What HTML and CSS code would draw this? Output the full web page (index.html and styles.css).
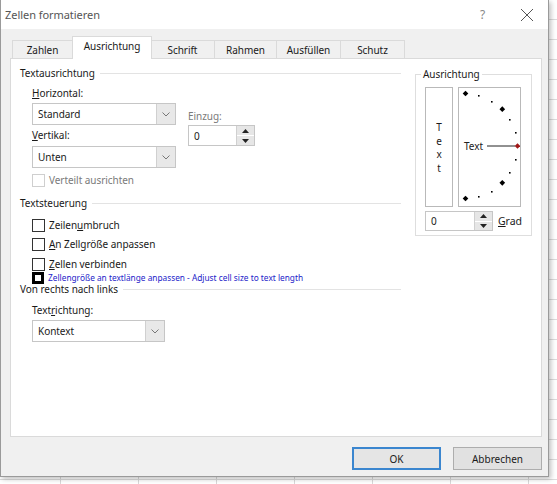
FILE: index.html
```html
<!DOCTYPE html>
<html lang="de">
<head>
<meta charset="utf-8">
<title>Zellen formatieren</title>
<link rel="stylesheet" href="styles.css">
</head>
<body>
<div class="desk">
  <div class="dialog">
    <div class="titlebar">
      <span class="title">Zellen formatieren</span>
      <span class="help">?</span>
      <span class="close">
        <svg width="14" height="14" viewBox="0 0 14 14"><path d="M1 1L13 13M13 1L1 13" stroke="#555" stroke-width="1" fill="none"/></svg>
      </span>
    </div>
    <div class="tabs">
      <div class="tab t1">Zahlen</div>
      <div class="tab t2 sel">Ausrichtung</div>
      <div class="tab t3">Schrift</div>
      <div class="tab t4">Rahmen</div>
      <div class="tab t5">Ausfüllen</div>
      <div class="tab t6">Schutz</div>
    </div>
    <div class="panel">
      <div class="leftcol">
        <div class="legend l1"><span>Textausrichtung</span></div>
        <div class="hv">
          <div class="hvleft">
            <div class="label lab-h"><u>H</u>orizontal:</div>
            <div class="select wide"><span class="val">Standard</span><span class="drop"><svg width="8" height="5" viewBox="0 0 8 5"><path d="M0.5 0.5L4 4L7.5 0.5" stroke="#777" fill="none"/></svg></span></div>
            <div class="label lab-v"><u>V</u>ertikal:</div>
            <div class="select wide sel2"><span class="val">Unten</span><span class="drop"><svg width="8" height="5" viewBox="0 0 8 5"><path d="M0.5 0.5L4 4L7.5 0.5" stroke="#777" fill="none"/></svg></span></div>
          </div>
          <div class="einzug">
            <div class="label gray">Einzug:</div>
            <div class="spin">
              <span class="val">0</span>
              <span class="spinbtns">
                <span class="sb"><svg width="7" height="4" viewBox="0 0 7 4"><path d="M0 4L3.5 0L7 4Z" fill="#222"/></svg></span>
                <span class="sb"><svg width="7" height="4" viewBox="0 0 7 4"><path d="M0 0L3.5 4L7 0Z" fill="#222"/></svg></span>
              </span>
            </div>
          </div>
        </div>
        <div class="cbrow dis"><span class="cb"></span><span class="gray">Verteilt ausrichten</span></div>
        <div class="legend l2"><span>Textsteuerung</span></div>
        <div class="cbrow c1"><span class="cb"></span><span>Zeilen<u>u</u>mbruch</span></div>
        <div class="cbrow c2"><span class="cb"></span><span><u>A</u>n Zellgröße anpassen</span></div>
        <div class="cbrow c3"><span class="cb"></span><span><u>Z</u>ellen verbinden</span></div>
        <div class="blackrow"><span class="bcb"></span><span class="blue">Zellengröße an textlänge anpassen - Adjust cell size to text length</span></div>
        <div class="legend l3"><span>Von rechts nach links</span></div>
        <div class="label lab-t">Text<u>r</u>ichtung:</div>
        <div class="select narrow"><span class="val">Kontext</span><span class="drop"><svg width="8" height="5" viewBox="0 0 8 5"><path d="M0.5 0.5L4 4L7.5 0.5" stroke="#777" fill="none"/></svg></span></div>
      </div>
      <fieldset class="orient">
        <legend>Ausrichtung</legend>
        <div class="orbox">
          <div class="vtext"><span>T</span><span>e</span><span>x</span><span>t</span></div>
          <div class="dial">
            <svg width="61" height="118" viewBox="0 0 61 118">
              <text x="5" y="62" font-family="Noto Sans, sans-serif" font-size="10" fill="#222">Text</text>
              <line x1="28" y1="58" x2="56" y2="58" stroke="#222" stroke-width="1"/>
              <g fill="#000">
                <rect x="4.5" y="3.5" width="4" height="4" transform="rotate(45 6.5 5.5)"/>
                <rect x="4.5" y="108.5" width="4" height="4" transform="rotate(45 6.5 110.5)"/>
                <rect x="41.3" y="19.2" width="4" height="4" transform="rotate(45 43.3 21.2)"/>
                <rect x="41.3" y="92.8" width="4" height="4" transform="rotate(45 43.3 94.8)"/>
                <rect x="19" y="7" width="1.6" height="1.6"/>
                <rect x="32" y="13" width="1.6" height="1.6"/>
                <rect x="50" y="31" width="1.6" height="1.6"/>
                <rect x="56" y="44" width="1.6" height="1.6"/>
                <rect x="56" y="71" width="1.6" height="1.6"/>
                <rect x="50" y="84" width="1.6" height="1.6"/>
                <rect x="32" y="103" width="1.6" height="1.6"/>
                <rect x="19" y="108" width="1.6" height="1.6"/>
              </g>
              <rect x="56.5" y="56" width="4" height="4" transform="rotate(45 58.5 58)" fill="#a01818"/>
            </svg>
          </div>
        </div>
        <div class="gradrow">
          <div class="spin gspin">
            <span class="val">0</span>
            <span class="spinbtns">
              <span class="sb"><svg width="7" height="4" viewBox="0 0 7 4"><path d="M0 4L3.5 0L7 4Z" fill="#222"/></svg></span>
              <span class="sb"><svg width="7" height="4" viewBox="0 0 7 4"><path d="M0 0L3.5 4L7 0Z" fill="#222"/></svg></span>
            </span>
          </div>
          <span class="grad"><u>G</u>rad</span>
        </div>
      </fieldset>
    </div>
    <div class="footer">
      <button class="btn ok">OK</button>
      <button class="btn cancel">Abbrechen</button>
    </div>
  </div>
</div>
</body>
</html>
```
FILE: styles.css
```css
html, body {
  margin: 0;
  padding: 0;
}
body {
  width: 557px;
  height: 484px;
  overflow: hidden;
  background-color: #ffffff;
  background-image:
    repeating-linear-gradient(to right, transparent 0, transparent 60px, #d8d8d8 60px, #d8d8d8 61px, transparent 61px, transparent 78px),
    repeating-linear-gradient(to bottom, transparent 0, transparent 19px, #dcdcdc 19px, #dcdcdc 20px);
  font-family: "Noto Sans", "Open Sans", sans-serif;
  font-size: 10px;
  letter-spacing: -0.05px;
  color: #1a1a1a;
}
.desk {
  width: 557px;
  height: 484px;
}
.dialog {
  width: 549px;
  height: 477px;
  background: #f0f0f0;
  border: 1px solid #9a9a9a;
  border-top: none;
  box-shadow: 2px 2px 5px rgba(0,0,0,0.25);
  display: flex;
  flex-direction: column;
  box-sizing: border-box;
}
.titlebar {
  height: 29px;
  background: #ffffff;
  display: flex;
  align-items: center;
  flex-shrink: 0;
}
.title {
  font-size: 11px;
  color: #555555;
  margin-left: 4px;
  flex: 1;
}
.help {
  font-size: 12px;
  color: #888;
  width: 8px;
  margin-right: 32px;
}
.close {
  width: 14px;
  height: 14px;
  margin-right: 14px;
  display: flex;
}
.tabs {
  display: flex;
  align-items: flex-end;
  height: 29px;
  padding-left: 11px;
  flex-shrink: 0;
}
.tab {
  height: 18px;
  box-sizing: border-box;
  border: 1px solid #dadada;
  border-bottom: none;
  border-left: none;
  background: #f0f0f0;
  display: flex;
  align-items: center;
  justify-content: center;
  color: #1a1a1a;
  font-size: 10px;
}
.t1 { width: 61px; border-left: 1px solid #dadada; }
.t2 { width: 80px; }
.t3 { width: 64px; }
.t4 { width: 62px; }
.t5 { width: 64px; }
.t6 { width: 64px; }
.tab.sel {
  height: 23px;
  background: #ffffff;
  margin-left: -1px;
  margin-right: -1px;
  margin-bottom: -1px;
  border-left: 1px solid #dadada;
  padding-bottom: 4px;
  position: relative;
  z-index: 2;
}
.panel {
  margin-left: 9px;
  width: 532px;
  height: 379px;
  box-sizing: border-box;
  background: #ffffff;
  border: 1px solid #dadada;
  display: flex;
  align-items: flex-start;
  flex-shrink: 0;
}
.leftcol {
  width: 381px;
  padding-left: 9px;
  display: flex;
  flex-direction: column;
}
.legend {
  height: 16px;
  display: flex;
  align-items: center;
}
.legend::after {
  content: "";
  flex: 1;
  height: 1px;
  background: #e3e3e3;
  margin-left: 5px;
}
.l1 { margin-top: 6px; }
.l2 { margin-top: 7px; }
.l3 { margin-top: -3px; }
.label {
  height: 16px;
  line-height: 16px;
}
.gray { color: #7a7a7a; }
.hv {
  display: flex;
  margin-left: 12px;
}
.lab-h { margin-top: 4px; }
.lab-v { margin-top: 2px; }
.lab-t { margin-top: 5px; margin-left: 12px; }
.select {
  height: 22px;
  box-sizing: border-box;
  border: 1px solid #c6c6c6;
  background: #fff;
  display: flex;
  align-items: center;
}
.select .val {
  flex: 1;
  padding-left: 5px;
}
.select .drop {
  width: 18px;
  height: 20px;
  background: #e8e8e8;
  border-left: 1px solid #d0d0d0;
  display: flex;
  align-items: center;
  justify-content: center;
}
.wide { width: 144px; margin-top: 2px; }
.sel2 { margin-top: 3px; }
.narrow { width: 133px; margin-left: 12px; margin-top: 2px; }
.einzug {
  margin-left: 12px;
  margin-top: 27px;
  display: flex;
  flex-direction: column;
}
.einzug .spin { margin-top: 1px; }
.spin {
  width: 67px;
  height: 21px;
  box-sizing: border-box;
  border: 1px solid #c6c6c6;
  background: #fff;
  display: flex;
  align-items: center;
}
.spin .val {
  flex: 1;
  padding-left: 5px;
}
.spinbtns {
  width: 17px;
  height: 100%;
  display: flex;
  flex-direction: column;
  border-left: 1px solid #d0d0d0;
}
.sb {
  flex: 1;
  background: #e6e6e6;
  display: flex;
  align-items: center;
  justify-content: center;
}
.sb + .sb { border-top: 1px solid #fff; }
.cbrow {
  height: 16px;
  display: flex;
  align-items: center;
  margin-left: 12px;
}
.cb {
  width: 13px;
  height: 13px;
  box-sizing: border-box;
  border: 1px solid #333;
  background: #fff;
  margin-right: 4px;
}
.dis { margin-top: 4px; }
.dis .cb { border-color: #cfcfcf; }
.c1 { margin-top: 6px; }
.c2 { margin-top: 3px; }
.c3 { margin-top: 4px; }
.blackrow {
  height: 12px;
  display: flex;
  align-items: center;
  margin-left: 12px;
}
.bcb {
  width: 12px;
  height: 12px;
  box-sizing: border-box;
  border: 3px solid #000;
  background: #fff;
  margin-right: 4px;
}
.blue {
  color: #2323c9;
  font-size: 8.3px;
  letter-spacing: 0;
  position: relative;
  top: -1px;
}
.orient {
  margin: 7px 0 0 14px;
  padding: 0 9px 4px 9px;
  width: 117px;
  box-sizing: border-box;
  border: 1px solid #dedede;
}
.orient legend {
  padding: 0 2px;
  margin-left: -4px;
  height: 16px;
  line-height: 16px;
}
.orbox {
  display: flex;
  margin-top: 5px;
  gap: 5px;
}
.vtext {
  width: 28px;
  height: 120px;
  box-sizing: border-box;
  border: 1px solid #b9b9b9;
  display: flex;
  flex-direction: column;
  align-items: center;
  justify-content: center;
  padding-top: 2px;
}
.vtext span {
  display: block;
  height: 13.5px;
  line-height: 13.5px;
  font-size: 10px;
}
.dial {
  width: 63px;
  height: 120px;
  box-sizing: border-box;
  border: 1px solid #b9b9b9;
}
.dial svg { display: block; }
.gradrow {
  display: flex;
  align-items: center;
  margin-top: 4px;
}
.gspin { width: 68px; height: 20px; }
.grad { margin-left: 5px; font-size: 10.5px; }
.footer {
  flex: 1;
  display: flex;
  justify-content: flex-end;
  align-items: flex-start;
  padding-top: 10px;
  padding-right: 6px;
  gap: 12px;
}
.btn {
  height: 23px;
  width: 89px;
  font-family: "Noto Sans", "Open Sans", sans-serif;
  font-size: 10px;
  color: #1a1a1a;
  background: #e1e1e1;
  border: 1px solid #adadad;
  padding: 0;
  margin: 0;
}
.btn.ok {
  border: 2px solid #3b86cf;
  background: #e5e5e5;
}
u { text-decoration: underline; text-underline-offset: 1px; }
```
